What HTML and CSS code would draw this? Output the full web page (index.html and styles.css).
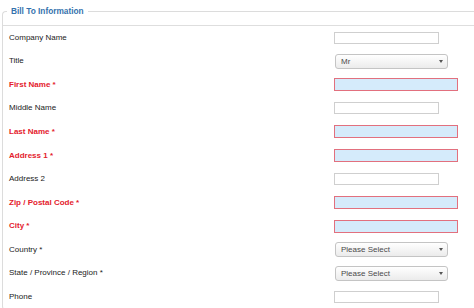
FILE: index.html
```html
<!DOCTYPE html>
<html lang="en">
<head>
<meta charset="utf-8">
<title>Bill To Information</title>
<link rel="stylesheet" href="styles.css">
</head>
<body>
<form class="page">
  <fieldset class="box">
    <legend class="box-title">Bill To Information</legend>
    <div class="rows">
      <label class="lbl">Company Name</label>
      <div class="ctl"><input class="txt" type="text"></div>

      <label class="lbl">Title</label>
      <div class="ctl"><div class="sel"><span>Mr</span><i class="arrow"></i></div></div>

      <label class="lbl req">First Name *</label>
      <div class="ctl"><input class="txt txt-req" type="text"></div>

      <label class="lbl">Middle Name</label>
      <div class="ctl"><input class="txt" type="text"></div>

      <label class="lbl req">Last Name *</label>
      <div class="ctl"><input class="txt txt-req" type="text"></div>

      <label class="lbl req">Address 1 *</label>
      <div class="ctl"><input class="txt txt-req" type="text"></div>

      <label class="lbl">Address 2</label>
      <div class="ctl"><input class="txt" type="text"></div>

      <label class="lbl req">Zip / Postal Code *</label>
      <div class="ctl"><input class="txt txt-req" type="text"></div>

      <label class="lbl req">City *</label>
      <div class="ctl"><input class="txt txt-req" type="text"></div>

      <label class="lbl">Country *</label>
      <div class="ctl"><div class="sel"><span>Please Select</span><i class="arrow"></i></div></div>

      <label class="lbl">State / Province / Region *</label>
      <div class="ctl"><div class="sel"><span>Please Select</span><i class="arrow"></i></div></div>

      <label class="lbl">Phone</label>
      <div class="ctl"><input class="txt" type="text"></div>
    </div>
  </fieldset>
</form>
</body>
</html>
```

FILE: styles.css
```css
html, body {
  margin: 0;
  padding: 0;
  background: #ffffff;
  overflow: hidden;
}
body {
  width: 474px;
  height: 308px;
  font-family: "Liberation Sans", Arial, sans-serif;
  font-size: 8px;
  color: #222;
}
.page {
  margin: 0;
}
.box {
  margin: 5px 0 0 2px;
  padding: 0;
  border: 1px solid #dcdcdc;
  border-right: none;
  border-radius: 4px 0 0 4px;
  min-width: 0;
}
.box-title {
  margin-left: 4px;
  padding: 0 4px;
  font-weight: bold;
  font-size: 8.3px;
  line-height: 12px;
  color: #3572ad;
}
.rows {
  margin-top: 8px;
  border-top: 1px solid #dedede;
  display: grid;
  grid-template-columns: 331px 1fr;
  grid-auto-rows: 23.55px;
  align-items: center;
}
.lbl {
  padding-left: 6px;
  line-height: 10px;
  color: #222;
}
.lbl.req {
  color: #e4212c;
  font-weight: bold;
}
.ctl {
  display: flex;
  align-items: center;
}
.txt {
  box-sizing: border-box;
  width: 105px;
  height: 12px;
  margin: 0;
  padding: 0;
  border: 1px solid #cfcfcf;
  background: #fff;
  outline: none;
}
.txt-req {
  width: 124px;
  height: 13px;
  border-color: #e2707e;
  background: #d5ebfb;
}
.sel {
  box-sizing: border-box;
  width: 113px;
  height: 15px;
  margin-left: 1px;
  padding: 0 4px 0 5px;
  border: 1px solid #c4c4c4;
  border-radius: 3px;
  background: linear-gradient(#ffffff, #ebebeb);
  display: flex;
  align-items: center;
  justify-content: space-between;
  color: #4a4a4a;
  font-size: 8px;
}
.arrow {
  width: 0;
  height: 0;
  border-left: 2.5px solid transparent;
  border-right: 2.5px solid transparent;
  border-top: 3px solid #555;
}
```
